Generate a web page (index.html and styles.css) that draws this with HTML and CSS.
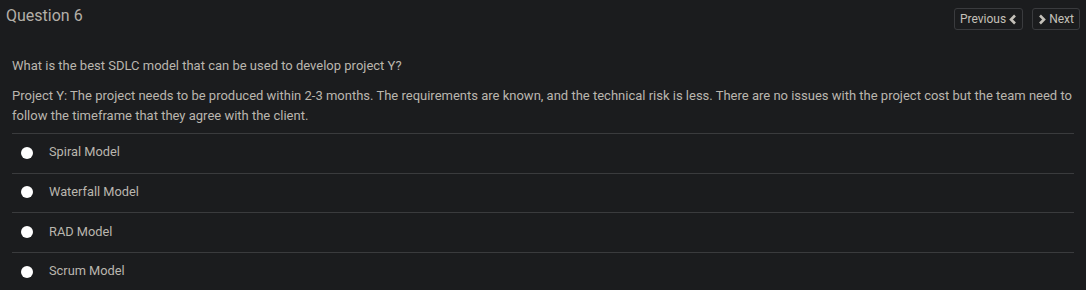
FILE: index.html
```html
<!DOCTYPE html>
<html lang="en">
  <head>
    <meta charset="UTF-8" />
    <meta name="viewport" content="width=device-width, initial-scale=1.0" />
    <title>Question 6</title>
    <link rel="stylesheet" href="styles.css">
  </head>
  <body>
    <div class="quiz">
      <div class="quiz-head">
        <div class="quiz-title">Question 6</div>
        <div class="quiz-nav">
          <button class="nav-btn">Previous
            <svg class="chev" viewBox="0 0 8 10"><path d="M6 1 L2 5 L6 9" /></svg>
          </button>
          <button class="nav-btn">
            <svg class="chev" viewBox="0 0 8 10"><path d="M2 1 L6 5 L2 9" /></svg>
            Next</button>
        </div>
      </div>

      <div class="quiz-body">
        <p class="quiz-question">What is the best SDLC model that can be used to develop project Y?</p>
        <p class="quiz-desc">Project Y: The project needs to be produced within 2-3 months. The requirements are known, and the technical risk is less. There are no issues with the project cost but the team need to follow the timeframe that they agree with the client.</p>

        <div class="answers">
          <label class="answer"><span class="radio"></span>Spiral Model</label>
          <label class="answer"><span class="radio"></span>Waterfall Model</label>
          <label class="answer"><span class="radio"></span>RAD Model</label>
          <label class="answer"><span class="radio"></span>Scrum Model</label>
        </div>
      </div>
    </div>
  </body>
</html>
```

FILE: styles.css
```css
body {
  margin: 0px;
  background-color: #1b1c1e;
  color: #bab6ae;
  font-family: Roboto, "Liberation Sans", sans-serif;
}

.quiz {
  padding: 0 6px 0 6px;
}

.quiz-head {
  display: flex;
  justify-content: space-between;
  align-items: flex-start;
  height: 50px;
}

.quiz-title {
  font-size: 16px;
  line-height: 20px;
  padding-top: 6px;
  color: #b3afa8;
}

.quiz-nav {
  display: flex;
  gap: 9px;
  padding-top: 8px;
}

.nav-btn {
  font-family: Roboto, "Liberation Sans", sans-serif;
  font-size: 12px;
  color: #c4c0b9;
  background: none;
  border: 1px solid #3a3b3e;
  border-radius: 3px;
  height: 22px;
  padding: 0 5px;
  display: flex;
  align-items: center;
  gap: 3px;
}

.chev {
  width: 8px;
  height: 11px;
  fill: none;
  stroke: #c4c0b9;
  stroke-width: 2.6;
}

.quiz-body {
  padding: 0 6px;
}

.quiz-question {
  font-size: 13px;
  line-height: 16px;
  margin: 8px 0 0 0;
}

.quiz-desc {
  font-size: 13px;
  line-height: 20px;
  margin: 12px 0 0 0;
}

.answers {
  margin-top: 7px;
}

.answer {
  display: flex;
  align-items: center;
  box-sizing: border-box;
  height: 39.67px;
  padding-bottom: 3px;
  border-top: 1px solid #3a3b3d;
  font-size: 12.8px;
}

.radio {
  width: 12px;
  height: 12px;
  border-radius: 50%;
  background-color: #ffffff;
  margin: 2px 16px 0 9px;
}
```
